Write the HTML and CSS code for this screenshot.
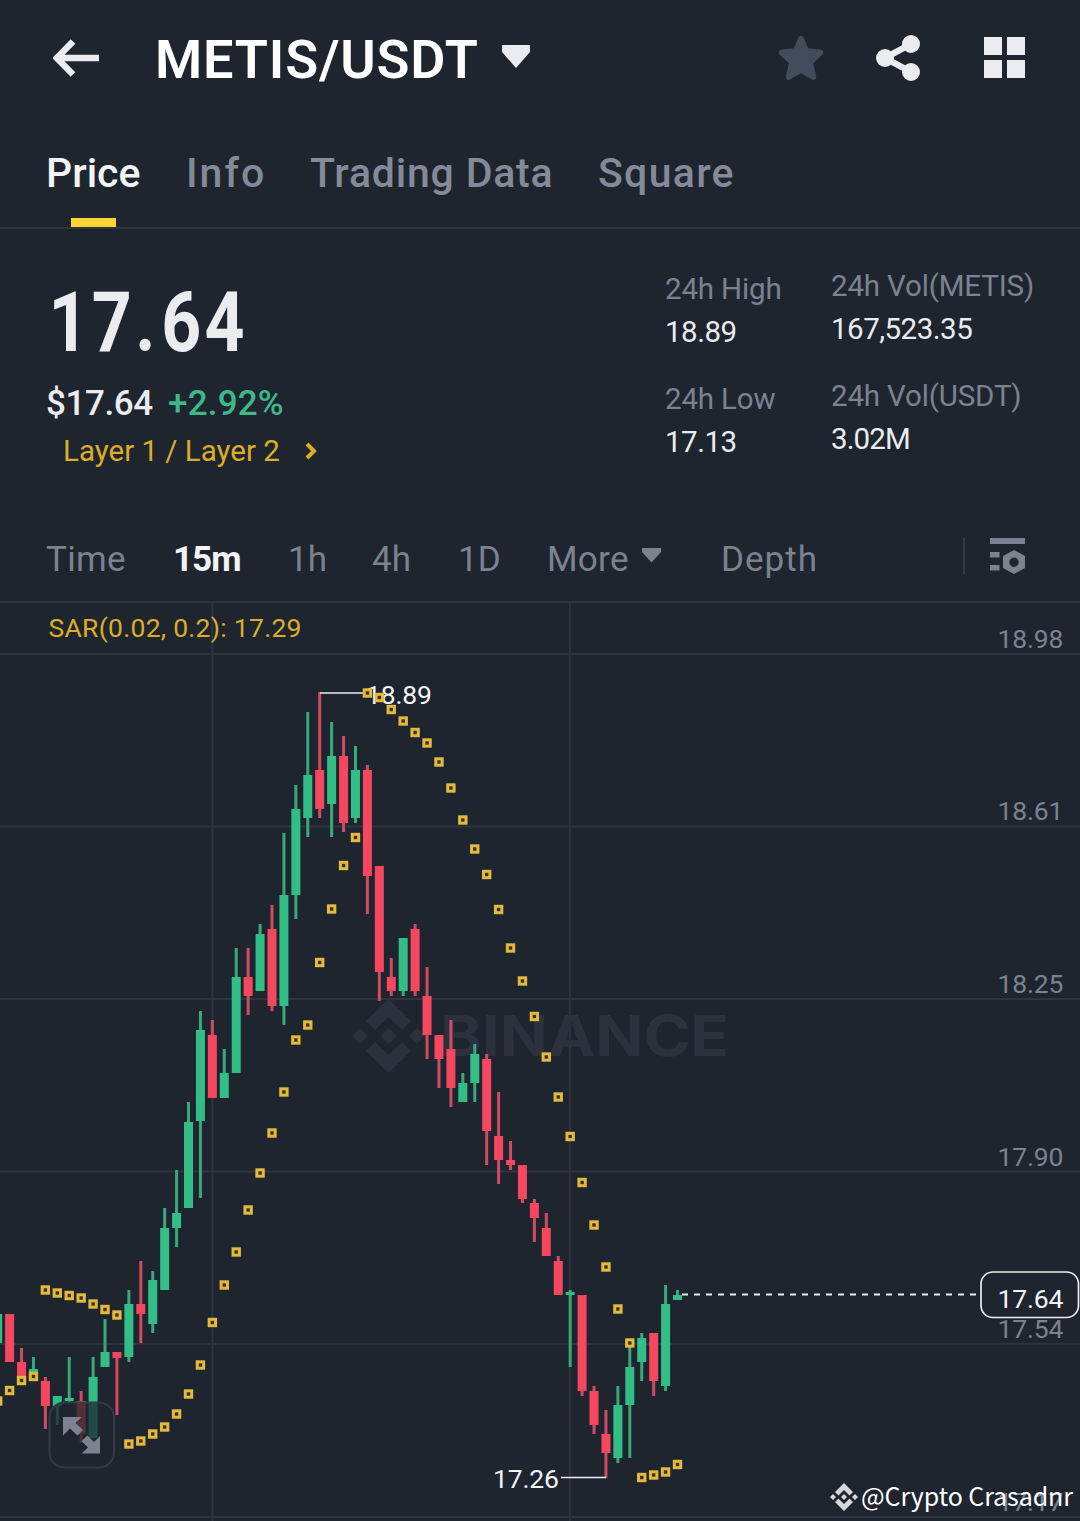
FILE: index.html
```html
<!DOCTYPE html>
<html lang="en">
<head>
<meta charset="utf-8">
<title>METIS/USDT</title>
<link rel="stylesheet" href="styles.css">
</head>
<body>
<div class="app">
  <header class="header">
    <svg class="back" width="46" height="38" viewBox="0 0 46 38"><path d="M20 2.5 3.8 19 20 35.500M4 19H46" fill="none" stroke="#eaecef" stroke-width="6.500"/></svg>
    <h1 class="pair">METIS/USDT</h1>
    <svg class="pair-caret" width="28" height="24" viewBox="0 0 28 24"><path d="M0 0H28V7L14 23 0 7Z" fill="#eaecef"/></svg>
    <div class="actions">
      <svg width="46" height="48" viewBox="0 0 46 48"><path d="M23 4.500 28.200 16.800 42.500 18.500 32 28.500 35.500 43 23 36 10.500 43 14 28.500 3.500 18.500 17.800 16.800Z" fill="#434c5a" stroke="#434c5a" stroke-width="5.500" stroke-linejoin="round"/></svg>
      <svg width="44" height="46" viewBox="0 0 44 46"><path d="M35 9 9 23 35 37" fill="none" stroke="#eaecef" stroke-width="6.500"/><circle cx="35" cy="9" r="9" fill="#eaecef"/><circle cx="9" cy="23" r="9" fill="#eaecef"/><circle cx="35" cy="37" r="9" fill="#eaecef"/></svg>
      <svg width="41" height="41" viewBox="0 0 41 41"><path d="M0 0H18V18H0ZM23 0H41V18H23ZM0 23H18V41H0ZM23 23H41V41H23Z" fill="#eaecef"/></svg>
    </div>
  </header>

  <nav class="tabs">
    <a class="tab tab-price active">Price</a>
    <a class="tab tab-info">Info</a>
    <a class="tab tab-data">Trading Data</a>
    <a class="tab tab-square">Square</a>
  </nav>

  <section class="summary">
    <div class="quote">
      <div class="last">17<span class="point">.</span>64</div>
      <div class="change"><span class="usd">$17.64</span><span class="pct">+2.92%</span></div>
      <div class="layer"><span>Layer 1 / Layer 2</span><svg width="12" height="18" viewBox="0 0 12 18"><path d="M2 2 9 9 2 16" fill="none" stroke="#dcae28" stroke-width="4"/></svg></div>
    </div>
    <dl class="stats stats-range">
      <dt>24h High</dt><dd>18.89</dd>
      <dt>24h Low</dt><dd>17.13</dd>
    </dl>
    <dl class="stats stats-volume">
      <dt>24h Vol(METIS)</dt><dd>167,523.35</dd>
      <dt>24h Vol(USDT)</dt><dd class="turnover">3.02M</dd>
    </dl>
  </section>

  <nav class="intervals">
    <a class="iv iv-time">Time</a>
    <a class="iv iv-15m selected">15m</a>
    <a class="iv iv-1h">1h</a>
    <a class="iv iv-4h">4h</a>
    <a class="iv iv-1d">1D</a>
    <a class="iv iv-more">More</a>
    <svg class="more-caret" width="19" height="15" viewBox="0 0 19 15"><path d="M0 0H19V4L9.500 14.500 0 4Z" fill="#7b8290"/></svg>
    <a class="iv iv-depth">Depth</a>
    <span class="divider"></span>
    <svg class="settings" width="35" height="36" viewBox="0 0 35 36"><path d="M0 0H35V6H0ZM0 14H9.500V19.500H0ZM0 27H9.500V32.500H0Z" fill="#7b8290"/><path fill-rule="evenodd" d="M24 12 35 18V30L24 36 13 30V18ZM24 19.500A4.700 4.700 0 1 0 24 28.900 4.700 4.700 0 1 0 24 19.500Z" fill="#7b8290"/></svg>
  </nav>

  <svg class="chart" width="1080" height="920" viewBox="0 601 1080 920">
    <path class="grid" d="M0 602H1080M0 654H1080M0 826.500H1080M0 999H1080M0 1171.500H1080M0 1344H1080M0 1517H1080M212.300 602V1521M570 602V1521"/>
    <g class="watermark">
      <path d="M388.500 999 411 1021 402 1030 388.500 1017 375 1030 366 1021ZM388.500 1073 411 1051 402 1042 388.500 1055 375 1042 366 1051ZM388.500 1028 396.500 1036 388.500 1044 380.500 1036ZM360 1028 368 1036 360 1044 352 1036ZM417 1028 425 1036 417 1044 409 1036Z"/>
      <text x="440" y="1056" textLength="289" lengthAdjust="spacingAndGlyphs">BINANCE</text>
    </g>
    <g id="candles"></g>
    <path class="leader" d="M320 693H366M561 1477.500H606"/>
    <text class="extreme" x="366" y="703.500" textLength="66">18.89</text>
    <text class="extreme" x="493" y="1487.500" textLength="66">17.26</text>
    <g id="sar"></g>
    <text class="sar-label" x="48.500" y="637" textLength="253">SAR(0.02, 0.2): 17.29</text>
    <g class="axis">
      <text x="997.500" y="647.500" textLength="66">18.98</text>
      <text x="997.500" y="819.500" textLength="66">18.61</text>
      <text x="997.500" y="992.500" textLength="66">18.25</text>
      <text x="997.500" y="1165.500" textLength="66">17.90</text>
      <text x="997.500" y="1338" textLength="66">17.54</text>
      <text x="997.500" y="1510.500" textLength="66">17.17</text>
    </g>
    <path class="last-line" d="M682 1294.500H981"/>
    <rect class="last-box" x="981" y="1272" width="97.500" height="45.500" rx="12"/>
    <text class="last-text" x="997.500" y="1308" textLength="66">17.64</text>
    <g class="expand">
      <rect x="49.500" y="1402.500" width="64.500" height="65" rx="15"/>
      <path d="M63 1417H81.500L75.500 1423 83 1430 77.500 1435.500 70 1428.500 63 1435.500ZM100 1453.500H81.500L88 1447.500 81.500 1441 87.500 1435.500 94 1442 100 1436Z"/>
    </g>
    <g class="credit">
      <path d="M844 1483 853 1492 849.500 1495.500 844 1490 838.500 1495.500 835 1492ZM844 1511 853 1502 849.500 1498.500 844 1504 838.500 1498.500 835 1502ZM844 1494 847 1497 844 1500 841 1497ZM833 1494 836 1497 833 1500 830 1497ZM855 1494 858 1497 855 1500 852 1497Z"/>
      <text x="861" y="1506" textLength="212">@Crypto Crasadnr</text>
    </g>
  </svg>
</div>
<script src="chart.js"></script>
</body>
</html>
```
FILE: styles.css
```css
* { box-sizing: border-box; }
body { margin: 0; background: #1f252f; }
.app {
  width: 1080px;
  height: 1521px;
  overflow: hidden;
  background: #1f252f;
  color: #eaecef;
  font-family: Roboto, "Liberation Sans", sans-serif;
  white-space: nowrap;
}
svg { display: block; flex: none; }

.header { display: flex; align-items: center; height: 115px; padding: 0 55px 0 53px; }
.pair { margin: 4px 0 0 56px; width: 347px; font-size: 54px; line-height: 64px; font-weight: 600; color: #fff; letter-spacing: 0.8px; }
.pair-caret { margin-top: -1px; }
.actions { display: flex; align-items: center; margin-left: auto; }
.actions svg + svg { margin-left: 52px; }
.actions svg:last-child { margin-left: 64px; }

.tabs { display: flex; height: 114px; padding: 4px 0 0 46px; border-bottom: 2px solid #2e3440; }
.tab { position: relative; font-size: 41px; line-height: 108px; font-weight: 500; color: #848a97; }
.tab-price { width: 140px; }
.tab-info { width: 124px; letter-spacing: 2px; }
.tab-data { width: 288px; letter-spacing: 0.8px; }
.tab-square { letter-spacing: 1.3px; }
.tab.active { color: #f2f3f6; }
.tab.active::after { content: ""; position: absolute; left: 25px; bottom: 0; width: 45px; height: 9px; background: #fcd535; }

.summary { display: flex; height: 288px; padding: 42px 0 0 46px; }
.quote { width: 619px; }
.last { height: 104px; padding-left: 3px; line-height: 104px; font-size: 84px; font-weight: 700; letter-spacing: 4px; transform: scaleX(0.83); transform-origin: left; }
.point { letter-spacing: 7px; }
.change { display: flex; height: 58px; line-height: 58px; font-size: 35px; font-weight: 500; }
.usd { width: 122px; letter-spacing: -0.4px; }
.pct { color: #3cb98a; letter-spacing: 0.2px; }
.layer { display: flex; align-items: center; height: 36px; padding-left: 17px; font-size: 29.5px; color: #dcae28; }
.layer span { width: 242px; }
.stats { margin: 0; font-size: 29.5px; line-height: 43px; }
.stats-range { width: 166px; margin-top: -3px; }
.stats-volume { margin-top: -6.5px; }
.stats dt { color: #7b8290; letter-spacing: -0.15px; }
.stats dd { margin: 0 0 24px; letter-spacing: -0.5px; }
.stats .turnover { letter-spacing: -0.9px; }

.intervals { display: flex; align-items: center; height: 84px; padding-left: 46px; font-size: 35px; color: #7b8290; }
.iv-time { width: 127px; letter-spacing: 0.3px; }
.iv-15m { width: 115px; letter-spacing: -1px; }
.iv-1h { width: 84px; }
.iv-4h { width: 86px; }
.iv-1d { width: 89px; }
.iv-more { width: 95px; letter-spacing: 0.3px; }
.iv-depth { width: 242px; letter-spacing: 1px; }
.more-caret { margin: -8px 60px 0 0; }
.selected { color: #f2f3f6; font-weight: 700; }
.divider { width: 2px; height: 36px; margin: -6px 25px 0 0; background: #343a46; }
.settings { margin-top: -6px; }

.grid { fill: none; stroke: #2e3440; stroke-width: 1.8; }
.watermark { fill: #2c323d; font: 700 57px Inter, sans-serif; }
.up { fill: #33bd87; }
.down { fill: #f5475f; }
.wick.up { fill: #3aa87e; }
.wick.down { fill: #cf4c62; }
.leader { stroke: #eaecef; stroke-width: 1.7; }
.extreme { fill: #f2f3f6; font-size: 26.5px; }
.sar-dot { fill: #3d3218; stroke: #e3b93f; stroke-width: 3; }
.sar-label { fill: #dcae28; font-size: 26.5px; }
.axis { fill: #7b8290; font-size: 26.5px; }
.last-line { stroke: #eaecef; stroke-width: 1.8; stroke-dasharray: 6 6; }
.last-box { fill: #1f252f; stroke: #eaecef; stroke-width: 1.7; }
.last-text { fill: #f2f3f6; font-size: 26.5px; }
.expand rect { fill: rgba(31, 37, 47, 0.75); stroke: #343a46; stroke-width: 2; }
.expand path { fill: #7b8290; }
.credit { fill: #fff; font-family: "Noto Sans CJK SC", sans-serif; font-size: 25px; }
.credit path { fill: #d5d7db; }
```
FILE: chart.js
```javascript
// Each candle: direction, high, body top, body bottom, low, SAR (chart y units)
const candles = [
  ["u",1314,1314,1343,1343,1401],
  ["d",1314,1314,1362,1362,1390.5],["d",1348,1362,1380,1380,1380.5],["u",1357,1369,1374,1374,1376.5],
  ["d",1377,1381,1406,1429,1290],["u",1396,1396,1406,1425,1293],["u",1357,1398,1401,1403,1295.5],
  ["d",1391,1401,1434,1443,1298],["u",1357,1377,1438,1438,1304],["u",1319,1352,1367,1367,1309.5],
  ["d",1352,1352,1358,1415,1315],["u",1290,1304,1357,1362,1444],["d",1261,1304,1314,1343,1441],
  ["u",1271,1280,1324,1333,1434],["u",1208,1228,1290,1290,1427],["u",1170,1213,1228,1247,1414],
  ["u",1102,1122,1208,1208,1394],["u",1011,1030,1121,1198,1365],["d",1020,1035,1098,1098,1322.5],
  ["u",1049,1073,1098,1098,1285],["u",948,977,1073,1073,1252],["d",948,977,996,1015,1210],
  ["u",924,934,991,991,1173],["d",905,929,1006,1011,1133],["u",833,895,1006,1025,1092],
  ["u",785,809,895,919,1040],["u",712,775,818,837,1025],["d",692,770,809,818,962.5],
  ["u",722,756,804,837,909],["d",736,756,823,832,865.5],["u",746,770,818,823,837.5],
  ["d",765,770,876,914,693],["d",866,866,972,1001,697.5],["d",958,977,991,996,709.5],
  ["u",938,938,991,996,721],["d",924,929,991,996,732.5],["d",967,996,1035,1059,743],
  ["d",1035,1035,1059,1088,762],["d",1020,1049,1088,1107,788],["u",1073,1083,1102,1102,820],
  ["u",1044,1054,1083,1102,849],["d",1054,1059,1131,1165,874.5],["d",1092,1136,1160,1184,909.5],
  ["d",1141,1160,1165,1170,948],["d",1165,1165,1199,1203,981],["d",1199,1203,1218,1242,1016.5],
  ["d",1213,1228,1256,1256,1057],["d",1256,1261,1295,1295,1097],["u",1290,1292,1295,1367,1136.5],
  ["d",1295,1295,1391,1396,1182.5],["d",1386,1391,1425,1434,1225],["d",1410,1434,1453,1478,1267],
  ["u",1386,1405,1458,1463,1309],["u",1346,1367,1405,1458,1343],["u",1333,1338,1362,1381,1477.5],
  ["d",1333,1333,1381,1396,1475],["u",1285,1304,1386,1391,1472],["u",1290,1295,1300,1300,1464.5]
];

const NS = "http://www.w3.org/2000/svg";
function rect(parent, cls, x, y, width, height) {
  const el = document.createElementNS(NS, "rect");
  el.setAttribute("class", cls);
  Object.entries({ x, y, width, height }).forEach(([k, v]) => el.setAttribute(k, v));
  parent.appendChild(el);
}

const bodies = document.getElementById("candles");
const dots = document.getElementById("sar");
candles.forEach(([dir, high, top, bottom, low, sar], i) => {
  const x = 9.6 + (i - 1) * 11.927;
  const cls = dir === "u" ? "up" : "down";
  rect(bodies, "wick " + cls, x - 1.5, high, 3, low - high);
  rect(bodies, cls, x - 4.5, top, 9, bottom - top);
  rect(dots, "sar-dot", x - 3.2, sar - 3.2, 6.4, 6.4);
});
```
